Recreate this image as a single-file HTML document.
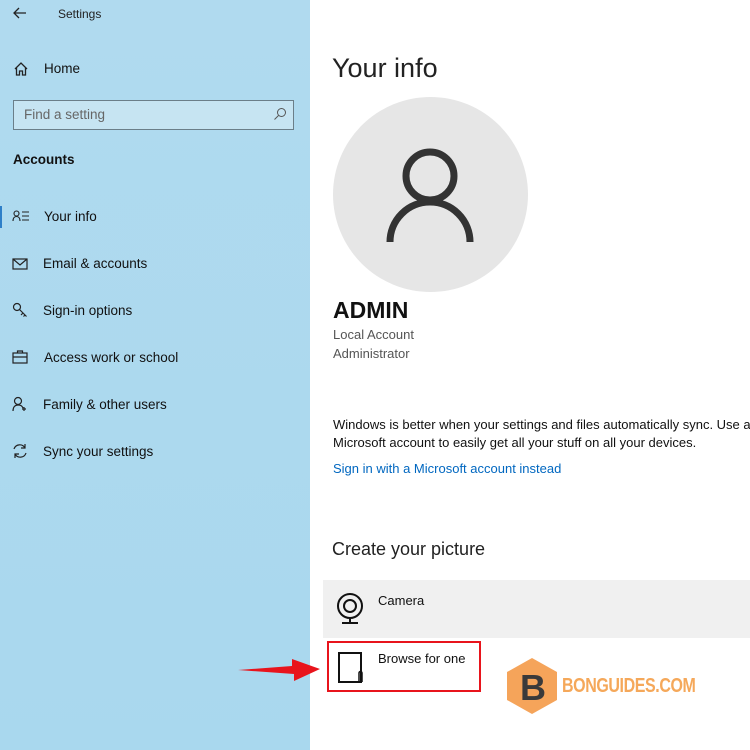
<!DOCTYPE html>
<html><head><style>
*{margin:0;padding:0;box-sizing:border-box}
body{width:750px;height:750px;overflow:hidden;font-family:"Liberation Sans",sans-serif;background:#fff;position:relative;color:#000}
.side{position:absolute;left:0;top:0;width:310px;height:750px;background:linear-gradient(180deg,#b0daef,#a9d8ee)}
.t{position:absolute;white-space:nowrap}
.nav{font-size:13.5px;color:#111}
svg{position:absolute}
</style></head><body>
<div class="side"></div>
<svg style="left:12px;top:6px" width="16" height="14" viewBox="0 0 16 14"><path d="M14 7H2M7 2L2 7l5 5" stroke="#222" stroke-width="1.3" fill="none"/></svg>
<div class="t" style="left:58px;top:7px;font-size:12px;color:#222">Settings</div>
<svg style="left:13px;top:61px" width="16" height="16" viewBox="0 0 16 16"><path d="M2 8L8 2l6 6M3.5 7v7h3v-4h3v4h3V7" stroke="#222" stroke-width="1.3" fill="none"/></svg>
<div class="t nav" style="left:44px;top:61px">Home</div>
<div style="position:absolute;left:13px;top:100px;width:281px;height:30px;border:1.5px solid #6b7e89;background:#c6e4f2"></div>
<div class="t" style="left:24px;top:107px;font-size:13.5px;color:#666">Find a setting</div>
<svg style="left:273px;top:107px" width="14" height="14" viewBox="0 0 14 14"><circle cx="8.5" cy="5.5" r="4" stroke="#555" fill="none"/><path d="M5.5 8.5L1.5 12.5" stroke="#555"/></svg>
<div class="t" style="left:13px;top:152px;font-size:13.5px;font-weight:bold;color:#111">Accounts</div>
<div style="position:absolute;left:0;top:206px;width:2px;height:22px;background:#2e7fc8"></div>
<svg style="left:12px;top:210px" width="18" height="12" viewBox="0 0 18 12"><circle cx="4.5" cy="3.5" r="2.5" stroke="#222" fill="none" stroke-width="1.1"/><path d="M1 11c0-3 1.5-4.5 3.5-4.5S8 8 8 11M10 2h7M10 6h7M10 10h7" stroke="#222" fill="none" stroke-width="1.1"/></svg>
<div class="t nav" style="left:44px;top:209px">Your info</div>
<svg style="left:12px;top:258px" width="16" height="12" viewBox="0 0 16 12"><rect x="1" y="1" width="14" height="10" stroke="#222" fill="none" stroke-width="1.2"/><path d="M1 1l7 6 7-6" stroke="#222" fill="none" stroke-width="1.2"/></svg>
<div class="t nav" style="left:43px;top:256px">Email &amp; accounts</div>
<svg style="left:12px;top:302px" width="16" height="16" viewBox="0 0 16 16"><circle cx="5" cy="5" r="3.5" stroke="#222" fill="none" stroke-width="1.2"/><path d="M7.5 7.5l7 7M11 11l-2 2M13 13l-1.5 1.5" stroke="#222" stroke-width="1.2"/></svg>
<div class="t nav" style="left:43px;top:303px">Sign-in options</div>
<svg style="left:12px;top:350px" width="16" height="14" viewBox="0 0 16 14"><rect x="1" y="3" width="14" height="10" stroke="#222" fill="none" stroke-width="1.2"/><path d="M5.5 3V1h5v2M1 7h14" stroke="#222" fill="none" stroke-width="1.2"/></svg>
<div class="t nav" style="left:44px;top:350px">Access work or school</div>
<svg style="left:12px;top:396px" width="16" height="16" viewBox="0 0 16 16"><circle cx="6" cy="5" r="3.5" stroke="#222" fill="none" stroke-width="1.2"/><path d="M1 15c0-4 2-6 5-6s4 1 5 3M12 11v4M10 13h4" stroke="#222" fill="none" stroke-width="1.2"/></svg>
<div class="t nav" style="left:43px;top:397px">Family &amp; other users</div>
<svg style="left:12px;top:443px" width="16" height="16" viewBox="0 0 16 16"><path d="M13 5a6 6 0 0 0-11 1M3 11a6 6 0 0 0 11-1M13 1v4H9M3 15v-4h4" stroke="#222" fill="none" stroke-width="1.2"/></svg>
<div class="t nav" style="left:43px;top:444px">Sync your settings</div>

<div class="t" style="left:332px;top:53px;font-size:27px;color:#222">Your info</div>
<div style="position:absolute;left:333px;top:97px;width:195px;height:195px;border-radius:50%;background:#e6e6e6"></div>
<svg style="left:386px;top:146px" width="88" height="98" viewBox="0 0 88 98"><circle cx="44" cy="30" r="24" stroke="#333" stroke-width="7" fill="none"/><path d="M4 96a40 40 0 0 1 80 0" stroke="#333" stroke-width="7" fill="none"/></svg>
<div class="t" style="left:333px;top:297px;font-size:23px;font-weight:bold;color:#111">ADMIN</div>
<div class="t" style="left:333px;top:327px;font-size:13px;color:#555">Local Account</div>
<div class="t" style="left:333px;top:346px;font-size:13px;color:#555">Administrator</div>
<div class="t" style="left:333px;top:417px;font-size:13px;color:#111">Windows is better when your settings and files automatically sync. Use a</div>
<div class="t" style="left:333px;top:435px;font-size:13px;color:#111">Microsoft account to easily get all your stuff on all your devices.</div>
<div class="t" style="left:333px;top:461px;font-size:13px;color:#0067c0">Sign in with a Microsoft account instead</div>
<div class="t" style="left:332px;top:539px;font-size:18px;color:#222">Create your picture</div>
<div style="position:absolute;left:323px;top:580px;width:427px;height:58px;background:#f0f0f0"></div>
<svg style="left:335px;top:593px" width="30" height="32" viewBox="0 0 30 32"><circle cx="15" cy="13" r="12" stroke="#111" stroke-width="2" fill="none"/><circle cx="15" cy="13" r="6" stroke="#111" stroke-width="2" fill="none"/><path d="M15 25v4M7 30h16" stroke="#111" stroke-width="2"/></svg>
<div class="t" style="left:378px;top:593px;font-size:13px;color:#111">Camera</div>
<div style="position:absolute;left:327px;top:641px;width:154px;height:51px;border:2px solid #e8141c"></div>
<svg style="left:337px;top:652px" width="28" height="32" viewBox="0 0 28 32"><rect x="2" y="1" width="22" height="29" stroke="#111" stroke-width="2" fill="none"/><path d="M22 30V21a1.5 1.5 0 0 1 3 0v9" stroke="#111" stroke-width="1.5" fill="none"/></svg>
<div class="t" style="left:378px;top:651px;font-size:13px;color:#111">Browse for one</div>
<svg style="left:236px;top:655px" width="86" height="28" viewBox="0 0 86 28"><path d="M2 15L56 11V4L84 14L58 26V19Z" fill="#e8141c"/></svg>
<svg style="left:506px;top:657px" width="52" height="58" viewBox="0 0 52 58"><path d="M26 1L51 15V43L26 57L1 43V15Z" fill="#f5a45a"/><text x="14" y="43" font-family="Liberation Sans" font-weight="bold" font-size="36" fill="#3a3a3a">B</text></svg>
<div class="t" style="left:562px;top:675px;font-size:20px;font-weight:bold;color:#f5a85a;letter-spacing:-0.5px;transform:scaleX(0.8);transform-origin:0 0">BONGUIDES.COM</div>
</body></html>
